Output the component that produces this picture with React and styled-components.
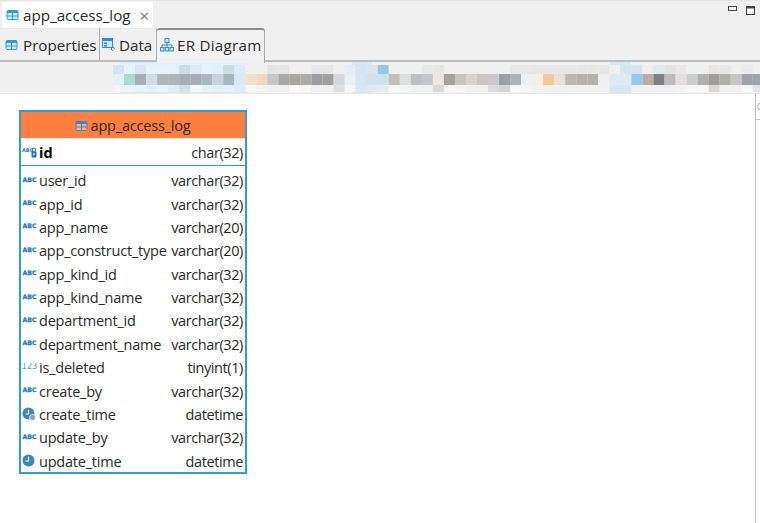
import React from "react";
import styled, { createGlobalStyle } from "styled-components";

const Global = createGlobalStyle`
  html, body { margin: 0; padding: 0; background: #fff; }
  body { font-family: "Open Sans", "Noto Sans", sans-serif; color: #2a2a2a; }
`;

const Page = styled.div`
  width: 760px;
  height: 523px;
  overflow: hidden;
  display: flex;
  flex-direction: column;
  background: #fff;
`;
const EditorBar = styled.div`
  height: 28px;
  flex: none;
  background: #f0f0f0;
  border-top: 1px solid #e6e6e6;
  box-sizing: border-box;
  padding-left: 2px;
  display: flex;
  align-items: flex-end;
  justify-content: space-between;
`;
const EditorTab = styled.div`
  width: 151px;
  height: 26px;
  background: #fff;
  display: flex;
  align-items: center;
  box-sizing: border-box;
  padding-left: 4px;
  gap: 4px;
  font-size: 15.2px;
`;
const Close = styled.span`
  font-size: 17px;
  color: #777;
  margin-left: 5px;
  line-height: 1;
`;
const WinButtons = styled.div`
  display: flex;
  gap: 9px;
  align-self: flex-start;
  padding: 5px 5px 0 0;
  align-items: flex-start;
`;
const TabBar = styled.div`
  height: 34px;
  flex: none;
  box-sizing: border-box;
  background: #f0f0f0;
  border-bottom: 2px solid #bdbdbd;
  display: flex;
  align-items: flex-start;
`;
const Tab = styled.div`
  box-sizing: border-box;
  width: ${(p) => p.$w}px;
  height: ${(p) => (p.$active ? 35 : 32)}px;
  display: flex;
  align-items: center;
  gap: ${(p) => p.$gap ?? 5}px;
  padding-left: ${(p) => p.$pl ?? 5}px;
  padding-bottom: ${(p) => (p.$active ? 3 : 0)}px;
  font-size: 15.2px;
  letter-spacing: ${(p) => (p.$active ? 0.25 : 0)}px;
  background: ${(p) => (p.$active ? "#f2f2f2" : "#f0f0f0")};
  border-right: 1px solid #aaa;
  border-top: ${(p) => (p.$active ? "2px solid #8a8a8a" : "1px solid #e8e8e8")};
  border-top-right-radius: ${(p) => (p.$active ? 3 : 0)}px;
  border-top-left-radius: ${(p) => (p.$active ? 3 : 0)}px;
  position: relative;
`;
const Toolbar = styled.div`
  height: 31px;
  flex: none;
  background: #f0f0f0;
  display: flex;
`;
const Canvas = styled.div`
  flex: 1;
  background: #fff;
  border-top: 1px solid #e8e8e8;
  display: flex;
  padding: 16px 0 0 19px;
  position: relative;
`;
const Sash = styled.div`
  position: absolute;
  right: 0;
  top: 0;
  width: 4px;
  height: 100%;
  border-left: 1px solid #c4c4c4;
  background: #fff;
`;
const SashHandle = styled.div`
  height: 25px;
  border-bottom: 1px solid #c4c4c4;
  display: flex;
  align-items: center;
  color: #aaa;
`;
const Entity = styled.div`
  width: 228px;
  height: 364px;
  box-sizing: border-box;
  border: 2px solid #2a9fd0;
  display: flex;
  flex-direction: column;
`;
const EntityHead = styled.div`
  height: 27px;
  flex: none;
  background: #ff7f3f;
  border-bottom: 1px solid #e8e8e8;
  box-sizing: border-box;
  padding: 1px 1px 0 0;
  display: flex;
  align-items: center;
  justify-content: center;
  gap: 3px;
  font-size: 14.5px;
  letter-spacing: -0.2px;
`;
const KeySection = styled.div`
  height: 27px;
  flex: none;
  box-sizing: border-box;
  border-bottom: 1px solid #2a9fd0;
  display: flex;
  align-items: center;
`;
const Columns = styled.div`
  flex: 1;
  padding-top: 3px;
  display: flex;
  flex-direction: column;
`;
const Row = styled.div`
  height: 23.38px;
  flex: ${(p) => (p.$fill ? 1 : "none")};
  display: flex;
  align-items: center;
  padding: 0 2px 0 1px;
  font-size: 14.5px;
`;
const ColIcon = styled.span`
  width: 17px;
  flex: none;
  display: flex;
  align-items: center;
  justify-content: flex-start;
`;
const ColName = styled.span`
  flex: 1;
  letter-spacing: ${(p) => (p.$bold ? 0 : -0.22)}px;
  font-weight: ${(p) => (p.$bold ? 700 : 400)};
  color: ${(p) => (p.$bold ? "#000" : "inherit")};
  white-space: nowrap;
`;
const ColType = styled.span`
  letter-spacing: -0.4px;
  white-space: nowrap;
`;

const TableIcon = ({ muted }) => (
  <svg width="13" height="12" viewBox="0 0 13 12">
    <rect x="0.5" y="1" width="12" height="10" rx="2" fill={muted ? "#3b86c4" : "#2f9bd8"} />
    <rect x="1.5" y="4" width="4.5" height="2.5" fill={muted ? "#f5b080" : "#cfe9f8"} />
    <rect x="7" y="4" width="4.5" height="2.5" fill={muted ? "#f5b080" : "#cfe9f8"} />
    <rect x="1.5" y="7.5" width="4.5" height="2.5" fill={muted ? "#f5b080" : "#cfe9f8"} />
    <rect x="7" y="7.5" width="4.5" height="2.5" fill={muted ? "#f5b080" : "#cfe9f8"} />
  </svg>
);
const DataIcon = () => (
  <svg width="14" height="13" viewBox="0 0 14 13">
    <rect x="0.5" y="0.5" width="10" height="9" fill="#cfe6f6" stroke="#2f8fd0" />
    <rect x="0.5" y="0.5" width="10" height="2.5" fill="#2f8fd0" />
    <rect x="2" y="4.5" width="3" height="1.5" fill="#2f8fd0" />
    <rect x="2" y="7" width="3" height="1.5" fill="#2f8fd0" />
    <path d="M9 11 L11 9 M11 9 L13 11 M9 11 L11 13" stroke="#2f8fd0" fill="none" />
  </svg>
);
const ErIcon = () => (
  <svg width="14" height="14" viewBox="0 0 14 14" fill="none" stroke="#2f8fd0">
    <rect x="5" y="0.5" width="4" height="4" fill="#cfe6f6" />
    <path d="M7 4.5V7M2 9V7H12V9M7 7V9" />
    <rect x="0.5" y="9.5" width="3.4" height="3.5" fill="#cfe6f6" />
    <rect x="5.2" y="9.5" width="3.4" height="3.5" fill="#cfe6f6" />
    <rect x="10" y="9.5" width="3.4" height="3.5" fill="#cfe6f6" />
  </svg>
);
const TinyLabel = ({ children, light }) => (
  <svg width="15" height="10" viewBox="0 0 15 10">
    <text
      x="7.5"
      y="5.5"
      textAnchor="middle"
      fontFamily="DejaVu Sans, sans-serif"
      fontSize={light ? 8 : 6.2}
      fontWeight={light ? 400 : 700}
      fill={light ? "#3f9bdc" : "#1f78c4"}
      stroke={light ? "none" : "#1f78c4"}
      strokeWidth={light ? 0 : 0.25}
    >
      {children}
    </text>
  </svg>
);
const KeyIcon = () => (
  <svg width="15" height="12" viewBox="0 0 15 12">
    <text x="0" y="5.5" fontFamily="DejaVu Sans, sans-serif" fontSize="5" fontWeight="700" fill="#1f78c4">ABC</text>
    <rect x="9.5" y="5.5" width="5" height="6" rx="1" fill="#1f78c4" />
    <circle cx="12" cy="4" r="1.8" fill="none" stroke="#1f78c4" />
    <circle cx="12" cy="8.3" r="1" fill="#cfe6f6" />
  </svg>
);
const ClockIcon = ({ badge }) => (
  <svg width="14" height="14" viewBox="0 0 14 14">
    <circle cx="6.5" cy="6.5" r="6" fill="#3b84c4" />
    <path d="M6.5 2.8V7H3.6" stroke="#fff" strokeWidth="1.2" fill="none" />
    {badge && <circle cx="10.5" cy="10.5" r="3" fill="#8fa3b3" stroke="#fff" strokeWidth="0.8" />}
  </svg>
);

const r1 = "d2e6f2 e6f3fc dae6f0 e6f3fc e6f3fc e4f1f9 ccdbe5 dde9f3 e6f3fc e2f0fa ccdbe6 dcebfb f0f0f0 f0f0f0 e4e4e4 e4e4e4 f0f0f0 f0f0f0 e6e6e6 e6e6e6 f0f0f0 e6eef5 d4e4f0 e0e4e8 8ecae6 f0f0f0 f0f0f0 f0f0f0 e8e8e8 e6e6e6 f0f0f0 f0f0f0 f0f0f0 f0f0f0 f0f0f0 f0f0f0 e8e8e8 e8e8e8 e6e6e6 e6e6e6 e6e6e6 e6e6e6 e6e6e6 e6e6e6 e6e6e6 f0f0f0 d6e4f0 d6e4f0 f0f0f0 e0e8f0 e2e2e2 e8e8e8 f0f0f0 f0f0f0 e6e6e6 e6e6e6 f0f0f0 eaeaee f0f0f0".split(" ");
const r2 = "e6f0f8 aedbcf a8aeb8 d0dce6 b0b5bb b0b5ba a8aeb6 a8aeb8 aab6c2 c8d2da a8b4bf d9e8f7 f2dfcf f0d8bf c6c6c6 a8a8a8 a8a6a4 aeaca6 9c9ca4 a0a09e d4d8dd ecf0f2 d4e4f0 d0e0ec cfe3e8 c4beb6 dde0dd bfc0c6 c5c6ca ebe6df a4a2a0 c6c4be d5d3cf ccc6c0 cac8ce 98a2a8 aeb2b6 eff1f0 f0f0f0 f5c998 e9dfd4 bcb8ae b4b2aa b4b2ac f0f0f0 dfe9f2 dfe9f2 8ecde8 b8aea6 808082 bcbcbe e3dfda cccfcf b2b0ae a09e9c afb1af c8c4c0 9fa2ac a0a4ac".split(" ");
const r3 = "f4f4f4 eef5fa e6f3fb e2f0fc e8f3fb e0edf6 d2e0ea f2f7fb e6f2fb e2effa e4f1fb dcebfb f6f6f6 f2f2f2 f0f0f0 f0f0f0 fafafa f6f6f6 f0f0f0 f0f0f0 dcdfdc f5f7f7 d8e6f2 dfe9f2 e6ebef f7f7f7 f4f4f4 f0f0f0 f0f0f0 d8d8d6 f6f6f6 f4f4f4 f0f0f0 f0f0f0 dcdcdc d2d4d6 f6f6f6 f4f4f4 f2f2f2 f0f0f0 f0f0f0 f0f0f0 f0f0f0 f0f0f0 f0f0f0 d8e6f2 d8e6f2 f0f0f0 f0f0f0 f0f0f0 f0f0f0 f2f2f2 f6f6f6 f8f8f8 d8d8d8 f0f0f0 f0f0f0 f6f6f6 e0e4ea".split(" ");

const Mosaic = () => (
  <svg width="760" height="31" viewBox="0 0 760 31">
    <rect x="120.5" y="0.5" width="127" height="30" fill="#e3f1fb" stroke="#d5e8f5" />
    <rect x="352" y="0" width="20" height="31" fill="#d6e6f3" />
    <rect x="610" y="0" width="21" height="31" fill="#d6e6f3" />
    {[[r1, 3, 9], [r2, 12, 11], [r3, 23, 7]].map(([row, y, h], ri) =>
      row.map((c, i) => (
        <rect key={ri + "-" + i} x={113 + i * 11.03} y={y} width="11.1" height={h} fill={"#" + c} />
      ))
    )}
  </svg>
);

const cols = [
  ["user_id", "varchar(32)", "abc"],
  ["app_id", "varchar(32)", "abc"],
  ["app_name", "varchar(20)", "abc"],
  ["app_construct_type", "varchar(20)", "abc"],
  ["app_kind_id", "varchar(32)", "abc"],
  ["app_kind_name", "varchar(32)", "abc"],
  ["department_id", "varchar(32)", "abc"],
  ["department_name", "varchar(32)", "abc"],
  ["is_deleted", "tinyint(1)", "num"],
  ["create_by", "varchar(32)", "abc"],
  ["create_time", "datetime", "clockb"],
  ["update_by", "varchar(32)", "abc"],
  ["update_time", "datetime", "clock"],
];

const iconFor = (k) => {
  if (k === "num") return <TinyLabel light>123</TinyLabel>;
  if (k === "clockb") return <ClockIcon badge />;
  if (k === "clock") return <ClockIcon />;
  return <TinyLabel>ABC</TinyLabel>;
};

export default function App() {
  return (
    <Page>
      <Global />
      <EditorBar>
        <EditorTab>
          <TableIcon />
          <span>app_access_log</span>
          <Close>×</Close>
        </EditorTab>
        <WinButtons>
          <svg width="9" height="5" viewBox="0 0 9 5"><rect x="0.5" y="0.5" width="8" height="4" fill="#fff" stroke="#444" /></svg>
          <svg width="9" height="9" viewBox="0 0 9 9"><rect x="0.5" y="0.5" width="8" height="8" fill="#fff" stroke="#444" /><rect x="0.5" y="0.5" width="8" height="2" fill="#444" /></svg>
        </WinButtons>
      </EditorBar>
      <TabBar>
        <Tab $w={100}><TableIcon /><span>Properties</span></Tab>
        <Tab $w={57} $pl={2} $gap={3}><DataIcon /><span>Data</span></Tab>
        <Tab $w={108} $pl={3} $gap={3} $active><ErIcon /><span>ER Diagram</span></Tab>
      </TabBar>
      <Toolbar><Mosaic /></Toolbar>
      <Canvas>
        <Entity>
          <EntityHead><TableIcon muted /><span>app_access_log</span></EntityHead>
          <KeySection>
            <Row $fill>
              <ColIcon><KeyIcon /></ColIcon>
              <ColName $bold>id</ColName>
              <ColType>char(32)</ColType>
            </Row>
          </KeySection>
          <Columns>
            {cols.map(([n, t, k]) => (
              <Row key={n}>
                <ColIcon>{iconFor(k)}</ColIcon>
                <ColName>{n}</ColName>
                <ColType>{t}</ColType>
              </Row>
            ))}
          </Columns>
        </Entity>
        <Sash><SashHandle><svg width="4" height="9" viewBox="0 0 4 9"><path d="M4 1L1 4.5L4 8" fill="none" stroke="#aaa" /></svg></SashHandle></Sash>
      </Canvas>
    </Page>
  );
}
